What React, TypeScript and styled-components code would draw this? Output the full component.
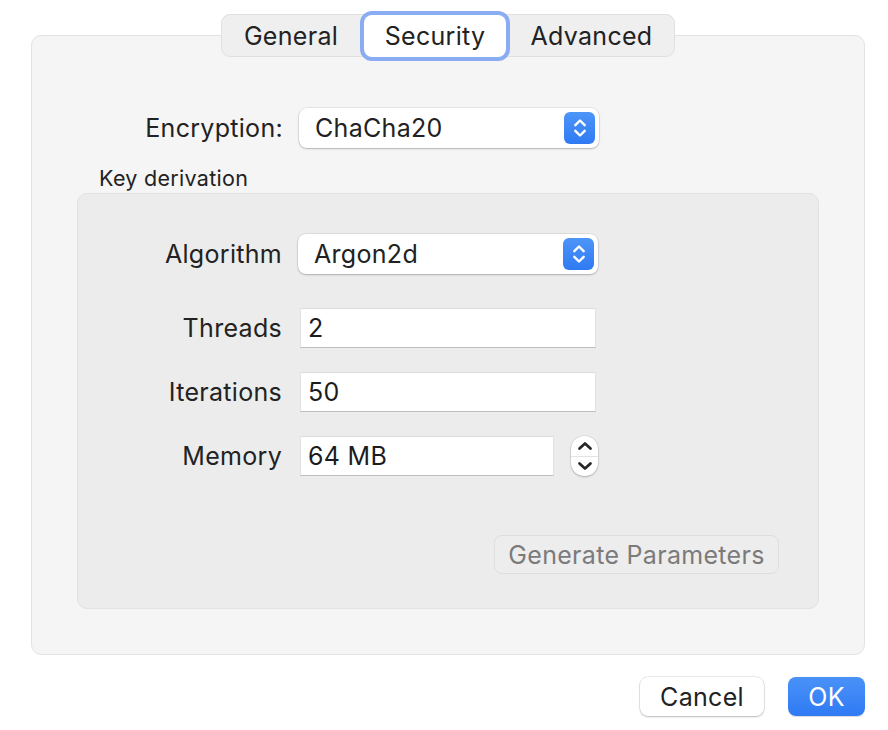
import React from "react";
import styled, { createGlobalStyle } from "styled-components";

const GlobalStyle = createGlobalStyle`
	html, body {
		margin: 0;
		padding: 0;
		background: #ffffff;
		font-family: Inter, "Liberation Sans", sans-serif;
		color: #222222;
		letter-spacing: 0.3px;
	}
`;

const Chevrons = ({ color }: { color: string }) => (
	<svg width="14" height="22" viewBox="0 0 14 22">
		<path
			d="M2.3 8.2 L7 3.5 L11.7 8.2"
			fill="none"
			stroke={color}
			strokeWidth="2.4"
			strokeLinecap="round"
			strokeLinejoin="round"
		/>
		<path
			d="M2.3 13.8 L7 18.5 L11.7 13.8"
			fill="none"
			stroke={color}
			strokeWidth="2.4"
			strokeLinecap="round"
			strokeLinejoin="round"
		/>
	</svg>
);

const tabs = [
	{ name: "General", width: 134 },
	{ name: "Security", width: 142 },
	{ name: "Advanced", width: 0 },
];

const App = () => {
	return (
		<Page>
			<GlobalStyle />
			<TabBar>
				{tabs.map((t) => (
					<Tab key={t.name} active={t.name === "Security"} w={t.width}>
						{t.name}
					</Tab>
				))}
			</TabBar>
			<Panel>
				<Row labelWidth={251}>
					<Label>Encryption:</Label>
					<Select value="ChaCha20" />
				</Row>
				<GroupTitle>Key derivation</GroupTitle>
				<Group>
					<Row labelWidth={204}>
						<Label>Algorithm</Label>
						<Select value="Argon2d" />
					</Row>
					<Fields>
						<Row labelWidth={204}>
							<Label>Threads</Label>
							<TextField width={296}>2</TextField>
						</Row>
						<Row labelWidth={204}>
							<Label>Iterations</Label>
							<TextField width={296}>50</TextField>
						</Row>
						<Row labelWidth={204}>
							<Label>Memory</Label>
							<TextField width={254}>64 MB</TextField>
							<Stepper>
								<StepHalf>
									<svg width="16" height="10" viewBox="0 0 16 10">
										<path
											d="M2.5 7.5 L8 2.5 L13.5 7.5"
											fill="none"
											stroke="#262626"
											strokeWidth="2.7"
											strokeLinecap="round"
											strokeLinejoin="round"
										/>
									</svg>
								</StepHalf>
								<StepHalf>
									<svg width="16" height="10" viewBox="0 0 16 10">
										<path
											d="M2.5 2.5 L8 7.5 L13.5 2.5"
											fill="none"
											stroke="#262626"
											strokeWidth="2.7"
											strokeLinecap="round"
											strokeLinejoin="round"
										/>
									</svg>
								</StepHalf>
							</Stepper>
						</Row>
					</Fields>
					<GenerateRow>
						<GenerateButton>Generate Parameters</GenerateButton>
					</GenerateRow>
				</Group>
			</Panel>
			<Footer>
				<Button w={124}>Cancel</Button>
				<Button primary w={77}>
					OK
				</Button>
			</Footer>
		</Page>
	);
};

const Select = ({ value }: { value: string }) => (
	<SelectBox>
		<SelectText>{value}</SelectText>
		<SelectArrow>
			<Chevrons color="#ffffff" />
		</SelectArrow>
	</SelectBox>
);

const Page = styled.div`
	width: 888px;
	height: 730px;
	box-sizing: border-box;
	padding-top: 14px;
	display: flex;
	flex-direction: column;
`;

const TabBar = styled.div`
	position: relative;
	z-index: 1;
	align-self: flex-start;
	margin-left: 221px;
	margin-bottom: -22px;
	height: 43px;
	width: 454px;
	box-sizing: border-box;
	display: flex;
	align-items: center;
	padding: 0 3px 0 2px;
	background: #efefef;
	border: 1px solid #e0e0e0;
	border-radius: 9px;
`;

const Tab = styled.div<{ active?: boolean; w: number }>`
	height: 42px;
	box-sizing: border-box;
	display: flex;
	align-items: center;
	justify-content: center;
	font-size: 25px;
	color: #222222;
	flex: ${(p) => (p.w ? `0 0 ${p.w}px` : "1")};
	margin: ${(p) => (p.active ? "0 6px" : "0")};
	${(p) =>
		p.active &&
		`
		background: #ffffff;
		border-radius: 8px;
		box-shadow: 0 0 0 4px #8aacf2, 0 1px 2px rgba(0,0,0,0.2);
	`}
`;

const Panel = styled.div`
	margin: 0 23px 0 31px;
	height: 620px;
	box-sizing: border-box;
	background: #f5f5f5;
	border: 1px solid #e3e3e3;
	border-radius: 10px;
	padding-top: 72px;
	display: flex;
	flex-direction: column;
`;

const Row = styled.div<{ labelWidth: number }>`
	display: flex;
	align-items: center;
	height: 40px;
	& > :first-child {
		width: ${(p) => p.labelWidth}px;
	}
`;

const Label = styled.div`
	text-align: right;
	font-size: 25px;
	line-height: 30px;
	color: #222222;
	margin-right: 16px;
	flex-shrink: 0;
`;

const SelectBox = styled.div`
	width: 300px;
	height: 40px;
	box-sizing: border-box;
	background: #ffffff;
	border-radius: 8px;
	box-shadow: 0 0 0 0.5px rgba(0, 0, 0, 0.12), 0 1px 2px rgba(0, 0, 0, 0.22);
	display: flex;
	align-items: center;
	justify-content: space-between;
	padding: 0 4px 0 16px;
`;

const SelectText = styled.span`
	font-size: 25px;
	line-height: 30px;
	color: #222222;
`;

const SelectArrow = styled.div`
	width: 31px;
	height: 32px;
	border-radius: 6px;
	background: linear-gradient(#4d95f8, #2f7af4);
	display: flex;
	align-items: center;
	justify-content: center;
`;

const GroupTitle = styled.div`
	font-size: 21.5px;
	line-height: 24px;
	color: #222222;
	margin: 18px 0 3px 67px;
`;

const Group = styled.div`
	margin: 0 45px 0 45px;
	height: 416px;
	box-sizing: border-box;
	background: #ececec;
	border: 1px solid #e2e2e2;
	border-radius: 10px;
	padding-top: 40px;
	display: flex;
	flex-direction: column;
`;

const Fields = styled.div`
	margin-top: 34px;
	display: flex;
	flex-direction: column;
	gap: 24px;
`;

const TextField = styled.div<{ width: number }>`
	width: ${(p) => p.width}px;
	height: 40px;
	box-sizing: border-box;
	margin-left: 2px;
	background: #ffffff;
	border-top: 1px solid #dcdcdc;
	border-left: 1px solid #e2e2e2;
	border-right: 1px solid #e2e2e2;
	border-bottom: 1.5px solid #bdbdbd;
	padding-left: 7px;
	display: flex;
	align-items: center;
	font-size: 25px;
	color: #1c1c1c;
`;

const Stepper = styled.div`
	width: 27px;
	height: 40px;
	margin-left: 17px;
	border-radius: 13px;
	background: #ffffff;
	box-shadow: 0 0 0 0.5px rgba(0, 0, 0, 0.12), 0 1px 2px rgba(0, 0, 0, 0.22);
	display: flex;
	flex-direction: column;
	overflow: hidden;
`;

const StepHalf = styled.div`
	flex: 1;
	display: flex;
	align-items: center;
	justify-content: center;
	&:first-child {
		border-bottom: 1px solid #e4e4e4;
	}
`;

const GenerateRow = styled.div`
	margin-top: 59px;
	display: flex;
	justify-content: flex-end;
	padding-right: 39px;
`;

const GenerateButton = styled.div`
	width: 285px;
	height: 39px;
	box-sizing: border-box;
	border: 1.5px solid #dedede;
	border-radius: 8px;
	background: #ededed;
	display: flex;
	align-items: center;
	justify-content: center;
	font-size: 25px;
	color: #7b7b7b;
`;

const Footer = styled.div`
	margin-top: 22px;
	display: flex;
	justify-content: flex-end;
	gap: 24px;
	padding-right: 23px;
`;

const Button = styled.div<{ primary?: boolean; w: number }>`
	height: 39px;
	width: ${(p) => p.w}px;
	box-sizing: border-box;
	border-radius: 8px;
	display: flex;
	align-items: center;
	justify-content: center;
	font-size: 25px;
	color: ${(p) => (p.primary ? "#ffffff" : "#222222")};
	background: ${(p) =>
		p.primary ? "linear-gradient(#4a92f8, #2f7af4)" : "#ffffff"};
	box-shadow: ${(p) =>
		p.primary
			? "0 0.5px 1px rgba(0,0,0,0.15)"
			: "0 0 0 0.5px rgba(0,0,0,0.14), 0 1px 2px rgba(0,0,0,0.22)"};
`;

export default App;
